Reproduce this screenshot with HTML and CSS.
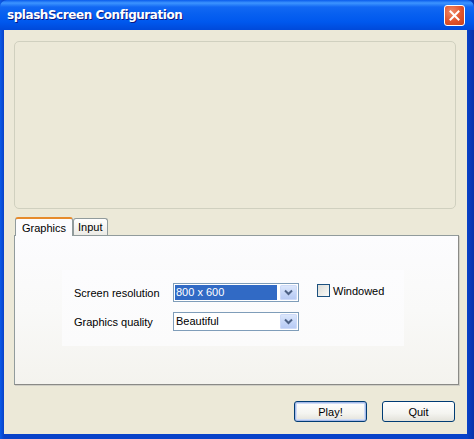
FILE: index.html
```html
<!DOCTYPE html>
<html lang="en">
<head>
  <meta charset="UTF-8" />
  <title>splashScreen Configuration</title>
  <link rel="stylesheet" href="styles.css">
</head>
<body>
  <div class="window">
    <div class="titlebar">
      <span class="title">splashScreen Configuration</span>
      <button class="close" aria-label="Close">
        <svg width="11" height="11" viewBox="0 0 11 11">
          <path d="M1.5 1.5 L9.5 9.5 M9.5 1.5 L1.5 9.5" stroke="#fff" stroke-width="2" stroke-linecap="square" />
        </svg>
      </button>
    </div>
    <div class="client">
      <div class="groupbox"></div>

      <div class="tabs">
        <div class="tabstrip">
          <div class="tab active">Graphics</div>
          <div class="tab">Input</div>
        </div>
        <div class="tabpanel">
          <div class="settings">
            <label class="label">Screen resolution</label>
            <div class="combo">
              <span class="value selected">800 x 600</span>
              <span class="arrow">
                <svg width="9" height="7" viewBox="0 0 9 7"><path d="M1 1.5 L4.5 5 L8 1.5" fill="none" stroke="#4d6185" stroke-width="2" /></svg>
              </span>
            </div>
            <label class="check"><span class="box"></span>Windowed</label>

            <label class="label">Graphics quality</label>
            <div class="combo">
              <span class="value">Beautiful</span>
              <span class="arrow">
                <svg width="9" height="7" viewBox="0 0 9 7"><path d="M1 1.5 L4.5 5 L8 1.5" fill="none" stroke="#4d6185" stroke-width="2" /></svg>
              </span>
            </div>
          </div>
        </div>
      </div>

      <div class="actions">
        <button class="btn default">Play!</button>
        <button class="btn">Quit</button>
      </div>
    </div>
  </div>
</body>
</html>
```

FILE: styles.css
```css
body {
  margin: 0;
  font-family: "Liberation Sans", Arial, sans-serif;
  font-size: 11px;
  color: #000;
  background: #0831d9;
}
.window {
  width: 474px;
  height: 439px;
  display: flex;
  flex-direction: column;
  box-sizing: border-box;
  background: linear-gradient(to right, #0a5be8 0, #0842c9 4px, #0842c9 calc(100% - 7px), #0733a8 100%);
}
.titlebar {
  height: 30px;
  display: flex;
  align-items: center;
  justify-content: space-between;
  padding: 0 9px 0 7px;
  background: linear-gradient(to bottom, #0a5cec 0, #3d95ff 3px, #1268f3 7px, #0760f0 14px, #0058ee 22px, #0049da 30px);
  border-radius: 7px 7px 0 0;
}
.title {
  color: #fff;
  font-family: "DejaVu Sans", sans-serif;
  font-weight: bold;
  font-size: 12px;
  letter-spacing: -0.45px;
  text-shadow: 1px 1px #0a1883;
}
.close {
  width: 21px;
  height: 21px;
  margin-top: 1px;
  padding: 0;
  display: flex;
  align-items: center;
  justify-content: center;
  border: 1px solid #fff;
  border-radius: 3px;
  background: radial-gradient(circle at 35% 30%, #f08a68 0, #e0532c 55%, #c7411c 100%);
}
.client {
  flex: 1;
  margin: 0 7px 5px 4px;
  padding: 11px 12px 0 10px;
  background: #ece9d8;
}
.groupbox {
  width: 442px;
  height: 168px;
  box-sizing: border-box;
  border: 1px solid #d0d0bf;
  border-radius: 5px;
}
.tabs {
  margin-top: 7px;
}
.tabstrip {
  display: flex;
  align-items: flex-end;
  height: 19px;
  padding-left: 1px;
}
.tab {
  position: relative;
  height: 16px;
  padding: 0 4px;
  line-height: 17px;
  border: 1px solid #919b9c;
  border-bottom: none;
  border-radius: 3px 3px 0 0;
  background: linear-gradient(to bottom, #fff, #ecebe6);
}
.tab.active {
  height: 19px;
  padding: 0 6px;
  line-height: 19px;
  border-top: 2px solid #e68b2c;
  box-sizing: border-box;
  background: #fcfcfe;
  margin-bottom: -1px;
  z-index: 1;
}
.tabpanel {
  width: 445px;
  height: 150px;
  box-sizing: border-box;
  padding: 34px 0 0 47px;
  border: 1px solid #919b9c;
  border-right-color: #8a8a86;
  border-bottom-color: #8a8a86;
  box-shadow: 1px 1px 0 #d0cfc6;
  background: linear-gradient(to bottom, #fcfcfe 0, #f9f9f8 50%, #f4f3ee 100%);
}
.settings {
  width: 342px;
  height: 76px;
  box-sizing: border-box;
  padding: 13px 0 0 12px;
  display: grid;
  grid-template-columns: 99px 126px auto;
  grid-template-rows: 19px 19px;
  row-gap: 10px;
  align-items: center;
  background: linear-gradient(to bottom, #fcfcfe, #fbfbfb);
}
.label {
  white-space: nowrap;
}
.combo {
  height: 19px;
  box-sizing: border-box;
  display: flex;
  align-items: stretch;
  padding: 1px;
  border: 1px solid #7f9db9;
  background: #fff;
}
.value {
  flex: 1;
  padding-left: 1px;
  margin-right: 3px;
  line-height: 15px;
}
.value.selected {
  background: #316ac5;
  color: #fff;
}
.arrow {
  width: 17px;
  display: flex;
  align-items: center;
  justify-content: center;
  border-radius: 2px;
  background: linear-gradient(to bottom, #dfe9fc, #c3d4f7 60%, #b6c9f4);
  box-shadow: inset 0 0 0 1px #cddaf8;
}
.check {
  align-self: start;
  display: flex;
  align-items: center;
  gap: 3px;
  margin: 1px 0 0 18px;
  white-space: nowrap;
}
.box {
  width: 11px;
  height: 11px;
  border: 1px solid #1c5180;
  background: linear-gradient(135deg, #dcdcd7, #fbfbf9);
}
.actions {
  display: flex;
  justify-content: flex-end;
  gap: 15px;
  margin-top: 16px;
}
.btn {
  width: 73px;
  height: 21px;
  padding: 0;
  font-family: "Liberation Sans", Arial, sans-serif;
  font-size: 11px;
  color: #000;
  border: 1px solid #003c74;
  border-radius: 3px;
  background: linear-gradient(to bottom, #fff 0, #f4f4f0 60%, #e3e2da 100%);
}
.btn.default {
  box-shadow: inset 0 0 0 1px #a6b9e8, inset 0 0 0 2px #cedcf6;
}
```
